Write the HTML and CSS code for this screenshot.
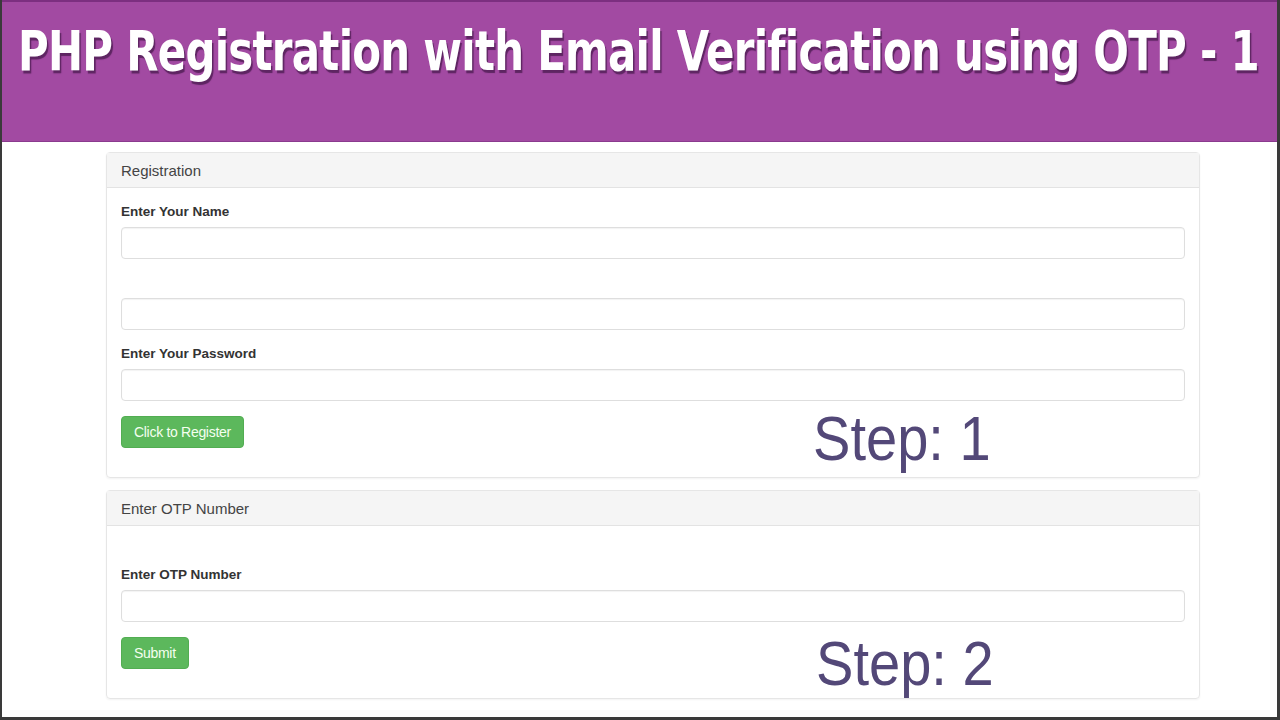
FILE: index.html
```html
<!DOCTYPE html>
<html lang="en">
<head>
<meta charset="UTF-8">
<meta name="viewport" content="width=device-width, initial-scale=1.0">
<title>PHP Registration with Email Verification using OTP</title>
<link rel="stylesheet" href="styles.css">
</head>
<body>
<div class="screen">
  <div class="banner">
    <h1 class="banner-title">PHP Registration with Email Verification using OTP - 1</h1>
  </div>
  <div class="container">
    <div class="panel">
      <div class="panel-heading">Registration</div>
      <div class="panel-body">
        <div class="form-group">
          <label class="form-label">Enter Your Name</label>
          <input type="text" class="form-control">
        </div>
        <div class="form-group">
          <div class="label-gap"></div>
          <input type="text" class="form-control">
        </div>
        <div class="form-group">
          <label class="form-label">Enter Your Password</label>
          <input type="password" class="form-control">
        </div>
        <div class="form-group">
          <button class="btn-success">Click to Register</button>
        </div>
      </div>
      <div class="step step-one">Step: 1</div>
    </div>
    <div class="panel">
      <div class="panel-heading">Enter OTP Number</div>
      <div class="panel-body otp-body">
        <div class="form-group">
          <label class="form-label">Enter OTP Number</label>
          <input type="text" class="form-control">
        </div>
        <div class="form-group">
          <button class="btn-success">Submit</button>
        </div>
      </div>
      <div class="step step-two">Step: 2</div>
    </div>
  </div>
</div>
</body>
</html>
```

FILE: styles.css
```css
body {
  margin: 0;
  font-family: "Liberation Sans", Arial, sans-serif;
  background-color: #fff;
}

.screen {
  width: 1280px;
  height: 720px;
  box-sizing: border-box;
  border-left: 2px solid #3a3a3a;
  border-right: 3px solid #3a3a3a;
  border-bottom: 3px solid #3a3a3a;
  overflow: hidden;
}

.banner {
  height: 142px;
  box-sizing: border-box;
  background-color: #a24aa2;
  border-top: 2px solid #7c2f80;
  border-bottom: 1px solid #8a3a8e;
  padding-left: 16px;
}

.banner-title {
  display: inline-block;
  margin: 0;
  padding-top: 17px;
  font-family: "DejaVu Sans", sans-serif;
  font-weight: bold;
  font-size: 55px;
  line-height: 64px;
  letter-spacing: -1px;
  color: #fff;
  white-space: nowrap;
  text-shadow: 2px 3px 1px #5e2562;
  transform: scaleX(0.763);
  transform-origin: left top;
}

.container {
  width: 1094px;
  margin: 10px 0 0 104px;
}

.panel {
  position: relative;
  border: 1px solid #e6e6e6;
  border-radius: 4px;
  box-shadow: 0 1px 2px rgba(0, 0, 0, 0.05);
  margin-bottom: 12px;
}

.panel-heading {
  height: 35px;
  box-sizing: border-box;
  padding: 9px 14px;
  background-color: #f5f5f5;
  border-bottom: 1px solid #e3e3e3;
  font-size: 15px;
  color: #444;
}

.panel-body {
  padding: 15px 14px 14px 14px;
}

.otp-body {
  padding-top: 40px;
}

.form-group {
  margin-bottom: 15px;
}

.form-label {
  display: block;
  font-size: 13.5px;
  font-weight: bold;
  color: #333;
  margin-bottom: 6px;
  line-height: 18px;
}

.label-gap {
  height: 24px;
}

.form-control {
  display: block;
  width: 1064px;
  height: 32px;
  box-sizing: border-box;
  border: 1px solid #dedede;
  border-radius: 4px;
  box-shadow: inset 0 1px 1px rgba(0, 0, 0, 0.05);
  background-color: #fff;
}

.btn-success {
  height: 32px;
  padding: 0 12px;
  background-color: #5cb85c;
  border: 1px solid #52ad52;
  border-radius: 4px;
  color: #f4fff0;
  font-family: "Liberation Sans", Arial, sans-serif;
  font-size: 14px;
  letter-spacing: -0.3px;
}

.step {
  position: absolute;
  font-size: 63px;
  color: #534878;
  line-height: 1;
  transform: scaleX(0.89);
  transform-origin: left top;
}

.step-one {
  left: 706px;
  top: 254px;
}

.step-two {
  left: 709px;
  top: 141px;
}
```
